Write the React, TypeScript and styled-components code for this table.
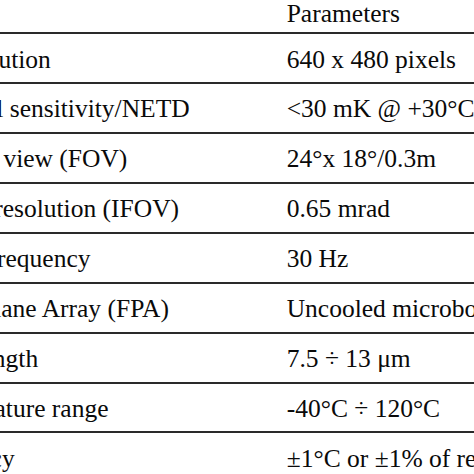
import React from "react";
import styled, { createGlobalStyle } from "styled-components";

const Global = createGlobalStyle`
  html, body { margin: 0; padding: 0; background: #ffffff; }
  #root { width: 474px; height: 474px; }
`;

const Frame = styled.div`
  width: 474px;
  height: 474px;
  overflow: hidden;
  background: #ffffff;
`;

const Table = styled.div`
  margin-left: -83px;
  width: 620px;
  display: flex;
  flex-direction: column;
  font-family: "Liberation Serif", "Times New Roman", serif;
  font-size: 25.5px;
  line-height: 28px;
  color: #0a0a0a;
`;

const Row = styled.div<{ $head?: boolean }>`
  box-sizing: border-box;
  display: grid;
  grid-template-columns: 369.7px 1fr;
  height: ${(p) => (p.$head ? "34.3px" : "49.9px")};
  border-bottom: 2px solid #2a2a2a;
`;

const Cell = styled.div<{ $head?: boolean }>`
  display: flex;
  align-items: flex-end;
  white-space: nowrap;
  padding-bottom: ${(p) => (p.$head ? "10.2px" : "8.6px")};
`;

const rows: [string, string][] = [
  ["IR resolution", "640 x 480 pixels"],
  ["Thermal sensitivity/NETD", "<30 mK @ +30°C"],
  ["Field of view (FOV)", "24°x 18°/0.3m"],
  ["Spatial resolution (IFOV)", "0.65 mrad"],
  ["Frame frequency", "30 Hz"],
  ["Focal Plane Array (FPA)", "Uncooled microbolometer"],
  ["Wavelength", "7.5 ÷ 13 μm"],
  ["Temperature range", "-40°C ÷ 120°C"],
  ["Accuracy", "±1°C or ±1% of reading"],
];

export default function App() {
  return (
    <>
      <Global />
      <Frame>
        <Table>
          <Row $head>
            <Cell $head></Cell>
            <Cell $head>Parameters</Cell>
          </Row>
          {rows.map(([k, v]) => (
            <Row key={k}>
              <Cell>{k}</Cell>
              <Cell>{v}</Cell>
            </Row>
          ))}
        </Table>
      </Frame>
    </>
  );
}
